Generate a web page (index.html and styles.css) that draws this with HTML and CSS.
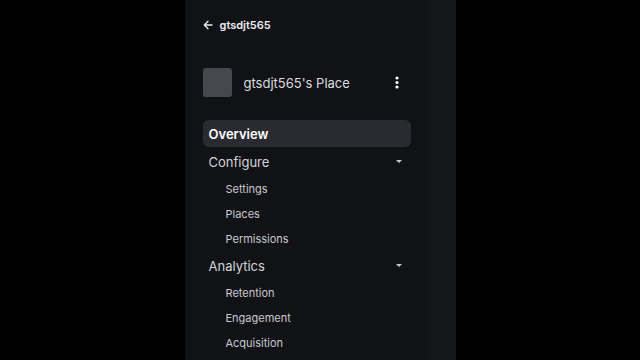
FILE: index.html
```html
<!DOCTYPE html>
<html lang="en">
<head>
    <meta charset="UTF-8">
    <meta name="viewport" content="width=device-width, initial-scale=1.0">
    <title>gtsdjt565's Place</title>
    <link rel="stylesheet" href="styles.css">
</head>
<body>
    <div class="panel">
        <div class="back-row">
            <svg class="back-icon" width="10" height="10" viewBox="0 0 10 10">
                <path d="M9 5H1.5M5 1.3L1.3 5L5 8.7" fill="none" stroke="#e8e8ea" stroke-width="1.4" stroke-linecap="round" stroke-linejoin="round"/>
            </svg>
            <span class="back-name">gtsdjt565</span>
        </div>

        <div class="place-row">
            <div class="place-thumb"></div>
            <span class="place-name">gtsdjt565's Place</span>
            <svg class="kebab" width="4" height="13" viewBox="0 0 4 13">
                <circle cx="2" cy="2" r="1.6" fill="#fff"/>
                <circle cx="2" cy="6.5" r="1.6" fill="#fff"/>
                <circle cx="2" cy="11" r="1.6" fill="#fff"/>
            </svg>
        </div>

        <ul class="nav">
            <li class="nav-item active">Overview</li>
            <li class="nav-item">Configure <span class="caret"></span></li>
            <li class="sub-item">Settings</li>
            <li class="sub-item">Places</li>
            <li class="sub-item">Permissions</li>
            <li class="nav-item">Analytics <span class="caret"></span></li>
            <li class="sub-item">Retention</li>
            <li class="sub-item">Engagement</li>
            <li class="sub-item">Acquisition</li>
        </ul>
    </div>
</body>
</html>
```

FILE: styles.css
```css
body {
    margin: 0;
    padding: 0;
    background-color: #000;
    font-family: Inter, "Open Sans", sans-serif;
    display: flex;
    justify-content: center;
    height: 360px;
    overflow: hidden;
}

.panel {
    width: 271px;
    height: 100%;
    box-sizing: border-box;
    padding: 0 45px 0 18px;
    background: linear-gradient(to right, #111216 0, #111216 240px, #16171b 250px, #16171b 271px);
}

.back-row {
    display: flex;
    align-items: center;
    height: 20px;
    margin-top: 15px;
}

.back-icon {
    margin-right: 7px;
}

.back-name {
    color: #ececee;
    font-size: 11px;
    font-weight: 600;
}

.place-row {
    display: flex;
    align-items: center;
    margin-top: 33px;
    height: 29px;
}

.place-thumb {
    width: 29px;
    height: 29px;
    border-radius: 3px;
    background-color: #46484e;
    flex-shrink: 0;
}

.place-name {
    flex-grow: 1;
    margin-left: 12px;
    color: #dcdcdf;
    font-size: 13px;
}

.kebab {
    margin-right: 12px;
}

.nav {
    list-style-type: none;
    margin: 23px 0 0;
    padding: 0;
}

.nav-item {
    display: flex;
    align-items: center;
    justify-content: space-between;
    height: 27px;
    padding: 0 9px 0 6px;
    margin-bottom: 1px;
    border-radius: 6px;
    color: #d4d4d8;
    font-size: 13px;
}

.sub-item + .nav-item {
    margin-top: 1px;
}

.nav-item.active {
    background-color: #2a2b30;
    color: #fff;
    font-weight: 600;
}

.caret {
    width: 0;
    height: 0;
    border-left: 3px solid transparent;
    border-right: 3px solid transparent;
    border-top: 3px solid #c8c8cc;
}

.sub-item {
    display: flex;
    align-items: center;
    height: 25px;
    padding-left: 23px;
    color: #c9c9cd;
    font-size: 11px;
}
```
